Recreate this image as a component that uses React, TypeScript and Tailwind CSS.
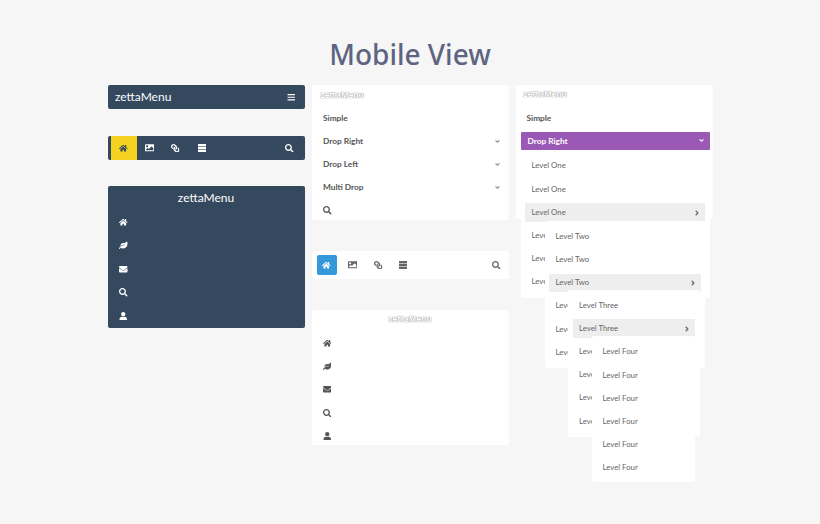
import { FaAngleDown, FaAngleRight, FaBars, FaEnvelope, FaHome, FaImage, FaLeaf, FaLink, FaSearch, FaUser } from 'react-icons/fa';

// three solid stripes, the menu icon in the bars
function Stripes() {
  return (
    <svg width="8" height="8" viewBox="0 0 8 8" fill="currentColor">
      <rect width="8" height="2.3" />
      <rect y="2.85" width="8" height="2.3" />
      <rect y="5.7" width="8" height="2.3" />
    </svg>
  );
}

function MirroredLink() {
  return <FaLink className="-scale-x-100" />;
}

function WideImage() {
  return <FaImage className="text-[9.5px]" />;
}

const stackIcons = [FaHome, FaLeaf, FaEnvelope, FaSearch, FaUser];
const barIcons = [WideImage, MirroredLink, Stripes];

function Logo() {
  return (
    <span className="font-['Open_Sans',sans-serif] text-[8px] font-bold leading-none text-white [text-shadow:0_0_1px_#8a8a8a,0_0_1px_#8a8a8a]">
      zettaMenu
    </span>
  );
}

function Row({ label, active, children }: { label: string; active?: boolean; children?: React.ReactNode }) {
  return (
    <div className={`relative mx-[4.5px] flex h-[18.5px] items-center justify-between rounded-[1px] pl-[6.5px] pr-[4px] ${active ? 'z-10 bg-[#eeeeee]' : ''}`}>
      <span className="whitespace-nowrap text-[7.8px] text-[#666666]">{label}</span>
      {active && <FaAngleRight className="text-[8px] text-[#666666]" />}
      {children}
    </div>
  );
}

function Panel({ label, activeIndex, className, children }: { label: string; activeIndex: number; className: string; children?: React.ReactNode }) {
  return (
    <div className={`flex flex-col gap-[4.7px] rounded-b-[2px] bg-white ${className}`}>
      {[0, 1, 2, 3, 4, 5].map((i) => (
        <Row key={i} label={label} active={i === activeIndex}>
          {i === activeIndex && children}
        </Row>
      ))}
    </div>
  );
}

export default function App() {
  return (
    <div className="flex h-[524px] w-[820px] flex-col items-center overflow-hidden bg-[#f6f6f6] pt-[32px] font-['Lato',sans-serif]">
      <h1 className="h-[53px] font-['Noto_Sans',sans-serif] text-[28px] font-medium leading-[44px] text-[#5d6482]">Mobile View</h1>

      <div className="flex gap-[7px]">
        {/* dark column */}
        <div className="flex w-[197px] flex-col">
          <div className="flex h-[24px] items-center justify-between rounded-[2px] bg-[#34495e] pl-[7.5px] pr-[9px] text-white">
            <span className="text-[12px]">zettaMenu</span>
            <FaBars className="text-[8.5px]" />
          </div>

          <div className="mt-[27px] flex h-[24px] items-center rounded-[2px] bg-[#34495e] pl-[3px] pr-[11px] text-[8.5px] text-white">
            <div className="flex h-full w-[26px] items-center justify-center bg-[#f4d21f] text-[#34495e]">
              <FaHome />
            </div>
            {barIcons.map((Icon, i) => (
              <div key={i} className="flex w-[26px] items-center justify-center">
                <Icon />
              </div>
            ))}
            <FaSearch className="ml-auto" />
          </div>

          <div className="mt-[26px] h-[142px] rounded-[2px] bg-[#34495e] text-white">
            <div className="pt-[3px] text-center text-[12px] leading-[18px]">zettaMenu</div>
            <div className="mt-[3.25px] flex flex-col">
              {stackIcons.map((Icon, i) => (
                <div key={i} className="flex h-[23.5px] items-center pl-[11.5px] text-[8.5px]">
                  <Icon />
                </div>
              ))}
            </div>
          </div>
        </div>

        {/* white column */}
        <div className="flex w-[197px] flex-col">
          <div className="h-[135px] rounded-[3px] bg-white">
            <div className="mb-[2.4px] flex h-[19px] items-center pl-[9px]">
              <Logo />
            </div>
            {['Simple', 'Drop Right', 'Drop Left', 'Multi Drop'].map((label, i) => (
              <div key={label} className="flex h-[23.2px] items-center justify-between pl-[11.5px] pr-[7.5px] text-[8.3px] font-bold text-[#555555]">
                <span>{label}</span>
                {i > 0 && <FaAngleDown className="text-[7px] text-[#888888]" />}
              </div>
            ))}
            <div className="flex h-[23.2px] items-center pl-[11.5px] text-[8.5px] text-[#555555]">
              <FaSearch />
            </div>
          </div>

          <div className="mt-[31px] flex h-[28px] items-center rounded-[3px] bg-white pl-[5px] pr-[8px] text-[8.5px] text-[#666666]">
            <div className="flex h-[20px] w-[20px] items-center justify-center rounded-[2px] bg-[#3498db] text-white">
              <FaHome />
            </div>
            <div className="ml-[3.5px] flex">
              {barIcons.map((Icon, i) => (
                <div key={i} className="flex w-[25.3px] items-center justify-center">
                  <Icon />
                </div>
              ))}
            </div>
            <FaSearch className="ml-auto" />
          </div>

          <div className="mt-[31px] h-[135px] rounded-[3px] bg-white text-[#555555]">
            <div className="flex h-[18px] items-center justify-center">
              <Logo />
            </div>
            <div className="mt-[3.4px] flex flex-col">
              {stackIcons.map((Icon, i) => (
                <div key={i} className="flex h-[23.3px] items-center pl-[11px] text-[8.5px]">
                  <Icon />
                </div>
              ))}
            </div>
          </div>
        </div>

        {/* open dropdown column */}
        <div className="w-[197px]">
          <div className="relative h-[134px] rounded-[3px] bg-white">
            <div className="mb-[3.4px] flex h-[18px] items-center pl-[8px]">
              <Logo />
            </div>
            <div className="flex h-[23.2px] items-center pl-[11px] text-[8.3px] font-bold text-[#555555]">Simple</div>
            <div className="relative ml-[5px] mr-[3px] mt-[2.4px]">
              <div className="flex h-[18px] items-center justify-between rounded-[1px] bg-[#9b59b6] pl-[7px] pr-[5px] text-[8.3px] font-bold text-white">
                <span>Drop Right</span>
                <FaAngleDown className="text-[7px]" />
              </div>
              <Panel label="Level One" activeIndex={2} className="absolute left-0 right-0 top-[18px] pb-[6.5px] pt-[7px]">
                <Panel label="Level Two" activeIndex={2} className="absolute left-[19.5px] right-0 top-[17.5px] rounded-[2px] py-[6.5px]">
                  <Panel label="Level Three" activeIndex={1} className="absolute left-[19px] right-[1px] top-[16px] rounded-[2px] py-[6.5px]">
                    <Panel label="Level Four" activeIndex={-1} className="absolute left-[19px] right-[0.5px] top-[16.5px] rounded-[2px] pb-[5px] pt-[7px]" />
                  </Panel>
                </Panel>
              </Panel>
            </div>
          </div>
        </div>
      </div>
    </div>
  );
}
